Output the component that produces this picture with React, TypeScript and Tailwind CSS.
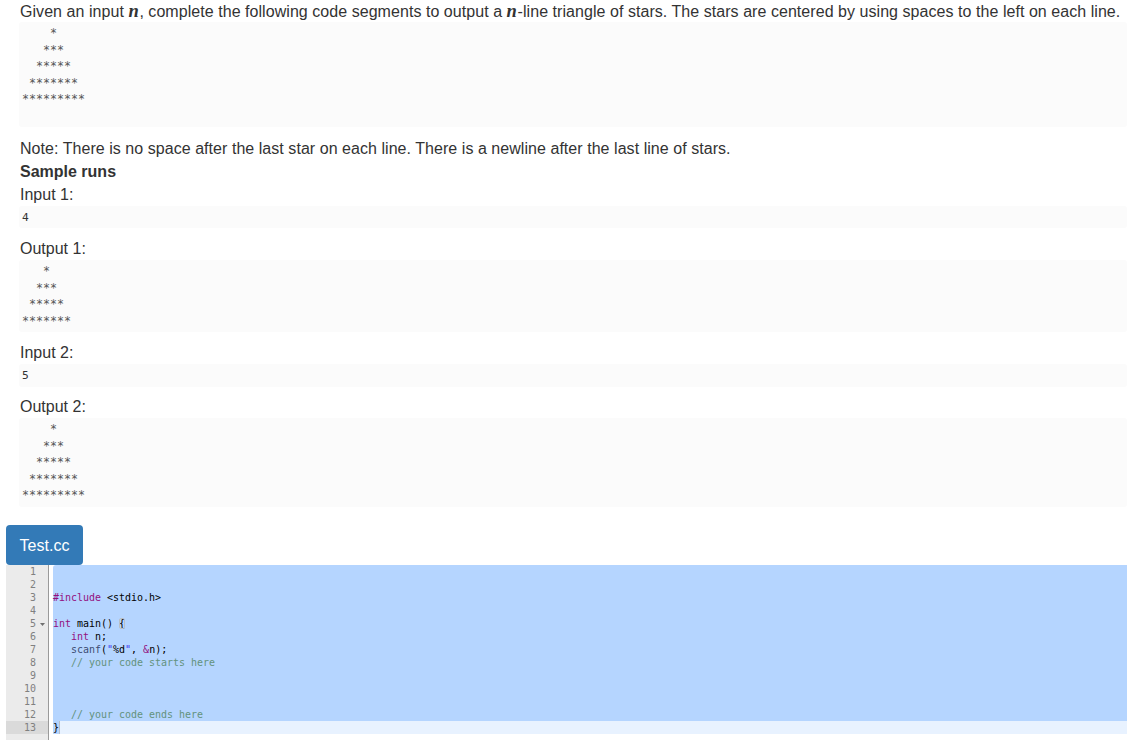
import type { ReactNode } from "react";

const triangle = (rows: number) =>
  Array.from({ length: rows }, (_, i) => " ".repeat(rows - 1 - i) + "*".repeat(2 * i + 1));

const MathN = () => (
  <span className="inline-block w-[11px] font-['Liberation_Serif',serif] text-[18.5px] leading-none font-bold italic">n</span>
);

const Label = ({ className = "", children }: { className?: string; children: ReactNode }) => (
  <p className={`h-[23px] pl-px leading-[24.5px] whitespace-nowrap ${className}`}>{children}</p>
);

const Sample = ({ lines, stars }: { lines: string[]; stars?: boolean }) => (
  <pre
    className={`rounded-[3px] bg-[#fbfbfb] py-[3px] pl-[3px] font-['DejaVu_Sans_Mono',monospace] ${
      stars ? "text-[11.63px] leading-[16.5px] text-[#555]" : "text-[11.2px] leading-[18px]"
    }`}
  >
    {lines.map((line, i) => (
      <div key={i} className="h-[16.5px]">
        {line}
      </div>
    ))}
  </pre>
);

const Keyword = ({ children }: { children: ReactNode }) => <span className="text-[#930f80]">{children}</span>;
const Comment = ({ children }: { children: ReactNode }) => <span className="text-[#63927d]">{children}</span>;

const code: ReactNode[] = [
  "",
  "",
  <>
    <Keyword>#include</Keyword> {"<stdio.h>"}
  </>,
  "",
  <>
    <Keyword>int</Keyword> main() <span className="rounded-[2px] outline-1 -outline-offset-1 outline-[#b9bfc6]">{"{"}</span>
  </>,
  <>
    {"   "}
    <Keyword>int</Keyword> n;
  </>,
  <>
    {"   "}
    <span className="text-[#3c4c72]">scanf</span>(<span className="text-[#3a3af0]">"</span>%d
    <span className="text-[#3a3af0]">"</span>, <Keyword>&amp;</Keyword>n);
  </>,
  <>
    {"   "}
    <Comment>// your code starts here</Comment>
  </>,
  "",
  "",
  "",
  <>
    {"   "}
    <Comment>// your code ends here</Comment>
  </>,
];

const Editor = () => (
  <div className="ml-[6px] flex h-[175px] font-['DejaVu_Sans_Mono',monospace] text-[9.97px] leading-[13px]">
    <div className="w-[43px] shrink-0 border-r border-[#9a9a9a] bg-[#ebebeb] text-[#808080]">
      {Array.from({ length: 13 }, (_, i) => (
        <div key={i} className={`relative h-[13px] pr-[12px] text-right ${i === 12 ? "bg-[#dadada]" : ""}`}>
          {i + 1}
          {i === 4 && (
            <svg className="absolute top-[6px] right-[3px]" width="5" height="3" viewBox="0 0 5 3">
              <path d="M0 0h5L2.5 3z" fill="#707070" />
            </svg>
          )}
        </div>
      ))}
    </div>
    <div className="flex-1 whitespace-pre text-black">
      {code.map((line, i) => (
        <div key={i} className={`ml-[4px] h-[13px] bg-[#b5d5ff] ${i === 0 ? "rounded-tl-[3px]" : ""}`}>
          {line}
        </div>
      ))}
      <div className="ml-[4px] h-[13px] bg-[#e8f2ff]">
        <span className="inline-block h-[13px] w-[7px] border-r border-[#b9bfc6] bg-[#b5d5ff]">{"}"}</span>
      </div>
    </div>
  </div>
);

const App = () => {
  return (
    <div className="h-[740px] w-[1127px] overflow-hidden bg-white font-['Liberation_Sans',Arial,sans-serif] text-[16px] text-[#333]">
      <div className="flex h-[525px] flex-col pl-[19px]">
        <p className="h-[22px] pl-px leading-[24px] tracking-[0.05px] whitespace-nowrap">
          Given an input <MathN />, complete the following code segments to output a <MathN />
          -line triangle of stars. The stars are centered by using spaces to the left on each line.
        </p>
        <Sample stars lines={[...triangle(5), ""]} />
        <Label className="mt-[9.5px] tracking-[0.047px]">
          Note: There is no space after the last star on each line. There is a newline after the last line of stars.
        </Label>
        <Label className="font-bold">Sample runs</Label>
        <Label>Input 1:</Label>
        <Sample lines={["4"]} />
        <Label className="mt-[9px]">Output 1:</Label>
        <Sample stars lines={triangle(4)} />
        <Label className="mt-[9px]">Input 2:</Label>
        <Sample lines={["5"]} />
        <Label className="mt-[8.5px]">Output 2:</Label>
        <Sample stars lines={triangle(5)} />
      </div>
      <div className="ml-[6px] h-[40px] w-[77px] rounded-[4px] bg-[#337ab7] text-center leading-[42px] text-white">
        Test.cc
      </div>
      <Editor />
    </div>
  );
};

export default App;
